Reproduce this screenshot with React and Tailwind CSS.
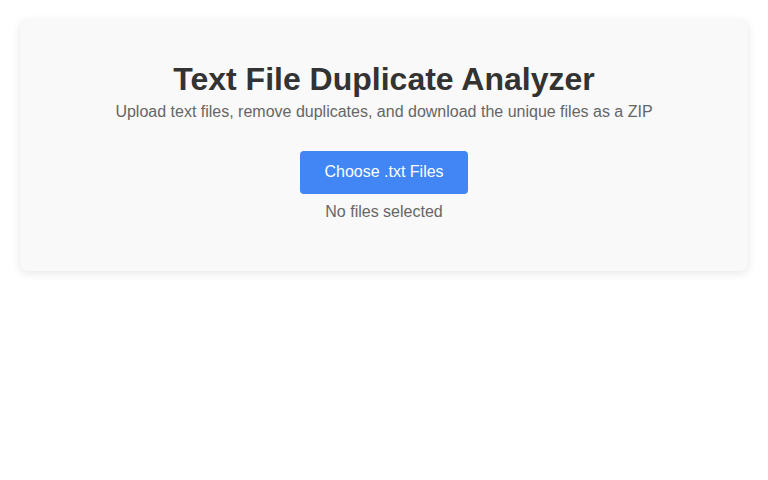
import { useState } from "react";

export default function App() {
  const [files, setFiles] = useState([]);

  return (
    <div className="min-h-screen bg-white p-5 font-['Liberation_Sans',Arial,sans-serif]">
      <div className="rounded-lg bg-[#f9f9f9] px-5 pt-[41px] pb-[50px] text-center shadow-[0_2px_10px_rgba(0,0,0,0.1)]">
        <h1 className="text-[32px] font-bold leading-[1.15] text-[#333]">Text File Duplicate Analyzer</h1>
        <p className="mt-[5px] text-base leading-[1.15] text-[#666]">
          Upload text files, remove duplicates, and download the unique files as a ZIP
        </p>
        <div className="mt-[30px] flex flex-col items-center">
          <label className="cursor-pointer rounded bg-[#4285f4] px-6 py-3 text-base leading-[1.15] text-white">
            Choose .txt Files
            <input
              type="file"
              accept=".txt"
              multiple
              className="hidden"
              onChange={(e) => setFiles(Array.from(e.target.files || []))}
            />
          </label>
          <p className="mt-[9px] text-base leading-[1.15] text-[#666]">
            {files.length === 0 ? "No files selected" : `${files.length} file(s) selected`}
          </p>
        </div>
      </div>
    </div>
  );
}
